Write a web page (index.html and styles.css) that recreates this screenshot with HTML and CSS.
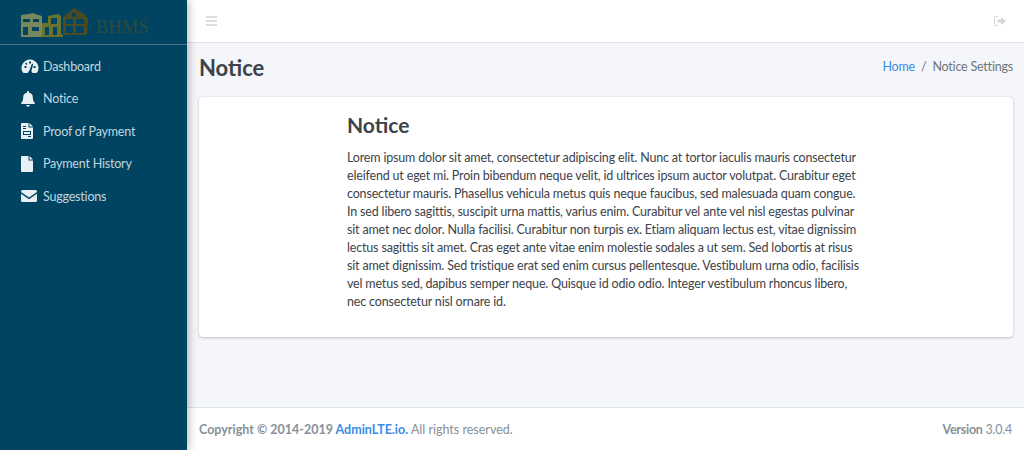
FILE: index.html
```html
<!DOCTYPE html>
<html lang="en">
<head>
    <meta charset="UTF-8">
    <title>Notice Settings</title>
    <link rel="stylesheet" href="styles.css">
</head>
<body>
    <aside class="sidebar">
        <a class="brand" href="#">
            <svg class="brand-logo" width="68" height="29" viewBox="0 0 68 29">
                <path fill="#78875c" d="M0 7 L8 6 L12 5 L14 6 L21 8 L21 29 L0 29 Z"/>
                <path fill="#004461" d="M2 11h7v3H2zM12 11h6v3h-6zM2 19h5v8H2zM11 19h7v4h-7z"/>
                <path fill="#69722f" d="M21 15 L27 15 L27 8 L37 6 L40 8 L40 26 L42 27 L42 29 L21 29 Z"/>
                <path fill="#004461" d="M30 10h6v6h-6zM24 19h4v8h-4zM32 19h4v8h-4z"/>
                <path fill="#4b4a20" d="M42 9 L53 0 L63 6 L67 11 L66 27 L42 27 Z"/>
                <path fill="#004461" d="M45 11h7v5h-7zM55 11h8v5h-8zM45 18h7v7h-7zM55 18h8v7h-8zM51 5h4v4h-4z"/>
            </svg>
            <span class="brand-text">BHMS</span>
        </a>
        <ul class="nav">
            <li><a href="#">
                <svg class="nav-icon" width="18" height="16" viewBox="0 0 18 16"><path fill="#e9f0f3" d="M9 1.500a8.500 8.500 0 0 0-7.400 12.700c.3.500.8.800 1.400.8h12c.6 0 1.100-.3 1.400-.8A8.500 8.500 0 0 0 9 1.500z"/><path fill="#004461" d="M8 3.500h2v2H8zM3.500 8h2v2h-2zM5 4.500l1.500 1.500-1 1L4 5.500zM12.500 8h2v2h-2zM8.200 13 11 5.500l1.200.4L10.400 13.200a2 2 0 1 1-2.200-.2z"/></svg>
                <span>Dashboard</span></a></li>
            <li><a href="#">
                <svg class="nav-icon" width="14" height="16" viewBox="0 0 14 16"><path fill="#e9f0f3" d="M7 0a1 1 0 0 0-1 1v.7A4.700 4.700 0 0 0 2.200 6.400c0 3.500-1.400 4.700-2 5.400-.4.500-.1 1.200.6 1.200h12.400c.7 0 1-.7.6-1.200-.6-.7-2-1.900-2-5.400A4.700 4.700 0 0 0 8 1.700V1a1 1 0 0 0-1-1zM5.200 14a1.800 1.800 0 0 0 3.600 0z"/></svg>
                <span>Notice</span></a></li>
            <li><a href="#">
                <svg class="nav-icon" width="12" height="16" viewBox="0 0 12 16"><path fill="#e9f0f3" d="M0 1a1 1 0 0 1 1-1h6.500v4.500H12V15a1 1 0 0 1-1 1H1a1 1 0 0 1-1-1zM8.500 0 12 3.500H8.500z"/><path fill="#004461" d="M2 3h3v1H2zM2 5h3v1H2zM2 8h8v4H2zM7 13h3v1H7z"/><path fill="#e9f0f3" d="M3 9h6v2H3z"/></svg>
                <span>Proof of Payment</span></a></li>
            <li><a href="#">
                <svg class="nav-icon" width="12" height="16" viewBox="0 0 12 16"><path fill="#e9f0f3" d="M0 1a1 1 0 0 1 1-1h6.500v4.500H12V15a1 1 0 0 1-1 1H1a1 1 0 0 1-1-1zM8.500 0 12 3.500H8.500z"/></svg>
                <span>Payment History</span></a></li>
            <li><a href="#">
                <svg class="nav-icon" width="16" height="12" viewBox="0 0 16 12"><path fill="#e9f0f3" d="M1.500 0h13A1.500 1.500 0 0 1 16 1.500v.6L8 7.500 0 2.100v-.6A1.500 1.500 0 0 1 1.500 0zM0 3.800l8 5.400 8-5.400v6.700a1.500 1.500 0 0 1-1.500 1.500h-13A1.500 1.500 0 0 1 0 10.500z"/></svg>
                <span>Suggestions</span></a></li>
        </ul>
    </aside>
    <div class="wrapper">
        <header class="topbar">
            <svg class="menu-icon" width="11" height="10" viewBox="0 0 11 10"><path fill="#dcdee0" d="M0 0h11v2H0zM0 4h11v2H0zM0 8h11v2H0z"/></svg>
            <svg class="logout-icon" width="12" height="10" viewBox="0 0 12 10"><path fill="#d5d7d9" d="M1.500 0H4v1H1.500a.5.500 0 0 0-.5.500v7a.5.500 0 0 0 .5.500H4v1H1.500A1.500 1.500 0 0 1 0 8.500v-7A1.500 1.500 0 0 1 1.500 0zM7 1l5 4-5 4V6.500H3.500v-3H7z"/></svg>
        </header>
        <main class="content">
            <div class="content-header">
                <h1>Notice</h1>
                <ol class="breadcrumb">
                    <li><a href="#">Home</a></li>
                    <li class="sep">/</li>
                    <li>Notice Settings</li>
                </ol>
            </div>
            <section class="card">
                <div class="notice">
                    <h2>Notice</h2>
                    <p>Lorem ipsum dolor sit amet, consectetur adipiscing elit. Nunc at tortor iaculis mauris consectetur<br>
                    eleifend ut eget mi. Proin bibendum neque velit, id ultrices ipsum auctor volutpat. Curabitur eget<br>
                    consectetur mauris. Phasellus vehicula metus quis neque faucibus, sed malesuada quam congue.<br>
                    In sed libero sagittis, suscipit urna mattis, varius enim. Curabitur vel ante vel nisl egestas pulvinar<br>
                    sit amet nec dolor. Nulla facilisi. Curabitur non turpis ex. Etiam aliquam lectus est, vitae dignissim<br>
                    lectus sagittis sit amet. Cras eget ante vitae enim molestie sodales a ut sem. Sed lobortis at risus<br>
                    sit amet dignissim. Sed tristique erat sed enim cursus pellentesque. Vestibulum urna odio, facilisis<br>
                    vel metus sed, dapibus semper neque. Quisque id odio odio. Integer vestibulum rhoncus libero,<br>
                    nec consectetur nisl ornare id.</p>
                </div>
            </section>
        </main>
        <footer class="footer">
            <div><b>Copyright &copy; 2014-2019 <a href="#">AdminLTE.io.</a></b> All rights reserved.</div>
            <div class="version"><b>Version</b> 3.0.4</div>
        </footer>
    </div>
</body>
</html>
```

FILE: styles.css
```css
:root {
    --sidebar: #004461;
    --bg: #f4f6f9;
    --text: #3d4349;
    --muted: #6c757d;
    --link: #3a8ce8;
}
html, body {
    height: 100%;
    margin: 0;
    overflow: hidden;
}
body {
    display: flex;
    background: var(--bg);
    color: var(--text);
    font-family: Lato, "Open Sans", Arial, sans-serif;
    font-size: 12.5px;
}
a {
    text-decoration: none;
}
.sidebar {
    width: 187px;
    flex: none;
    background: var(--sidebar);
    box-shadow: 2px 0 8px #0004;
    z-index: 2;
}
.brand {
    display: flex;
    align-items: flex-end;
    height: 45px;
    box-sizing: border-box;
    padding: 8px 0 7px 21px;
    border-bottom: 1px solid #4b6f82;
}
.brand-text {
    color: #2f4b3c;
    font-family: "Liberation Serif", serif;
    font-size: 18px;
    line-height: 20px;
    letter-spacing: 0.5px;
    margin: 0 0 0 7px;
}
.nav {
    list-style: none;
    margin: 5px 0 0;
    padding: 0;
}
.nav a {
    display: flex;
    align-items: center;
    height: 32.5px;
    color: #c2d6df;
    letter-spacing: -0.2px;
}
.nav-icon {
    flex: none;
    margin-left: 21px;
}
.nav span {
    position: absolute;
    left: 43px;
}
.wrapper {
    flex: 1;
    display: flex;
    flex-direction: column;
    min-width: 0;
}
.topbar {
    display: flex;
    justify-content: space-between;
    align-items: center;
    height: 43px;
    box-sizing: border-box;
    padding: 0 18px 0 19px;
    background: #fff;
    border-bottom: 1px solid #dee2e6;
}
.content {
    flex: 1;
    padding: 0 11px 0 12px;
}
.content-header {
    display: flex;
    justify-content: space-between;
    align-items: center;
    height: 54px;
}
h1 {
    margin: 0 0 4px;
    font-size: 22px;
    font-weight: 700;
    line-height: 50px;
}
.breadcrumb {
    display: flex;
    gap: 6px;
    list-style: none;
    margin: 0 0 7px;
    padding: 0;
    color: var(--muted);
    letter-spacing: -0.2px;
}
.breadcrumb a {
    color: var(--link);
}
.card {
    height: 240px;
    background: #fff;
    border-radius: 4px;
    box-shadow: 0 0 1px #0000002e, 0 1px 3px #00000033;
}
.notice {
    padding: 14px 0 0 148px;
}
h2 {
    margin: 0 0 10px;
    font-size: 21px;
    font-weight: 700;
    line-height: 28px;
}
.notice p {
    margin: 0;
    line-height: 18px;
    white-space: nowrap;
    letter-spacing: -0.17px;
}
.footer {
    display: flex;
    justify-content: space-between;
    align-items: center;
    height: 42px;
    padding: 0 12px;
    background: #fff;
    border-top: 1px solid #dee2e6;
    color: #869099;
}
.footer a {
    color: var(--link);
}
.version {
    letter-spacing: -0.25px;
}
```
